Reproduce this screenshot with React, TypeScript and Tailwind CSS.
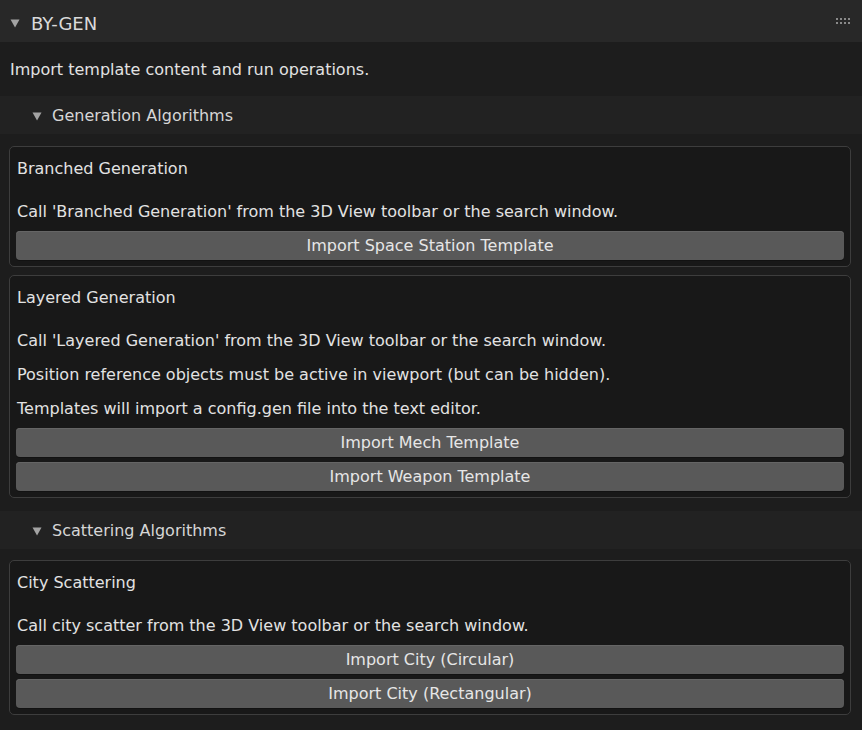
import React from 'react';

function Triangle({ className }: { className?: string }) {
  return (
    <svg width="10" height="9" viewBox="0 0 10 9" className={className}>
      <path d="M0.5 0.5 L9.5 0.5 L5 8.5 Z" fill="#a3a3a3" />
    </svg>
  );
}

function DragDots() {
  return (
    <div className="grid grid-cols-4 gap-x-[2px] gap-y-[2px]">
      {Array.from({ length: 8 }).map((_, i) => (
        <div key={i} className="w-[2px] h-[2px] bg-[#8a8a8a]" />
      ))}
    </div>
  );
}

function Line({ children }: { children: React.ReactNode }) {
  return <div className="h-[34px] flex items-center px-[1px] pt-[1px] text-[#e2e2e2]">{children}</div>;
}

function Btn({ label }: { label: string }) {
  return (
    <div className="h-[34px] flex items-center">
      <button className="w-full h-[29px] rounded-[4px] bg-[#595959] text-[#e6e6e6] pt-[1px] shadow-[inset_0_1px_0_#656565,0_1px_0_#121212] flex items-center justify-center">
        {label}
      </button>
    </div>
  );
}

function Box({ title, lines, buttons }: { title: string; lines: string[]; buttons: string[] }) {
  return (
    <div className="ml-[9px] mr-[11px] rounded-[5px] border border-[#3d3d3d] bg-[#181818] px-[6px] pt-[4px] pb-[4px]">
      <Line>{title}</Line>
      <div className="h-[9px]" />
      {lines.map((l) => (
        <Line key={l}>{l}</Line>
      ))}
      {buttons.map((b) => (
        <Btn key={b} label={b} />
      ))}
    </div>
  );
}

function SubHeader({ title }: { title: string }) {
  return (
    <div className="h-[38px] bg-[#222222] flex items-center pl-[32px] pt-[2px] text-[#d6d6d6]">
      <Triangle />
      <span className="ml-[10px]">{title}</span>
    </div>
  );
}

export default function App() {
  return (
    <div
      className="w-[862px] h-[730px] bg-[#1d1d1d] overflow-hidden text-[16px]"
      style={{ fontFamily: '"DejaVu Sans", sans-serif' }}
    >
      <div className="h-[42px] bg-[#282828] flex items-center pl-[10px] pr-[12px] pt-[4px]">
        <Triangle />
        <span className="ml-[11px] text-[18px] text-[#dadada]">BY-GEN</span>
        <div className="ml-auto -mt-[4px]">
          <DragDots />
        </div>
      </div>
      <div className="h-[54px] flex items-center pl-[10px] pt-[1px] text-[#e2e2e2]">
        Import template content and run operations.
      </div>
      <SubHeader title="Generation Algorithms" />
      <div className="h-[12px]" />
      <Box
        title="Branched Generation"
        lines={["Call 'Branched Generation' from the 3D View toolbar or the search window."]}
        buttons={['Import Space Station Template']}
      />
      <div className="h-[8px]" />
      <Box
        title="Layered Generation"
        lines={[
          "Call 'Layered Generation' from the 3D View toolbar or the search window.",
          'Position reference objects must be active in viewport (but can be hidden).',
          'Templates will import a config.gen file into the text editor.',
        ]}
        buttons={['Import Mech Template', 'Import Weapon Template']}
      />
      <div className="h-[13px]" />
      <SubHeader title="Scattering Algorithms" />
      <div className="h-[11px]" />
      <Box
        title="City Scattering"
        lines={['Call city scatter from the 3D View toolbar or the search window.']}
        buttons={['Import City (Circular)', 'Import City (Rectangular)']}
      />
    </div>
  );
}
